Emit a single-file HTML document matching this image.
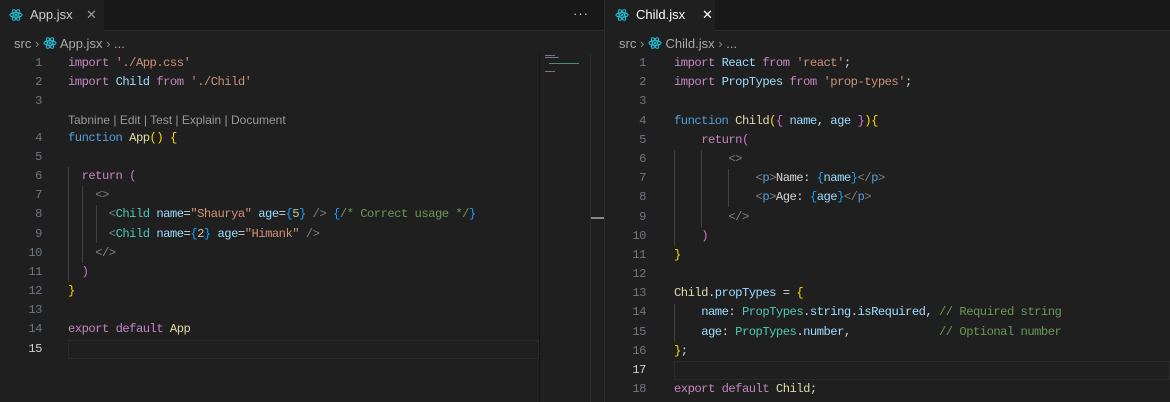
<!DOCTYPE html>
<html><head><meta charset="utf-8"><style>
*{margin:0;padding:0;box-sizing:border-box}
html,body{width:1170px;height:402px;overflow:hidden}
body{background:#1f1f1f;position:relative;font-family:"Liberation Sans",sans-serif}
.tabbar{position:absolute;top:0;height:31px;background:#181818;border-bottom:1px solid #2b2b2b}
.tab{position:absolute;top:0;height:31px;background:#1f1f1f;color:#ccc;font-size:13px;line-height:30px}
.crumb{position:absolute;top:36px;color:#a9a9a9;font-size:13px}
.code{position:absolute;font-family:"Liberation Mono",monospace;font-size:12.2px;letter-spacing:-0.52px;color:#d4d4d4}
.ln{position:absolute;font-family:"Liberation Mono",monospace;font-size:12.2px;letter-spacing:-0.5px;color:#6e7681;text-align:right;width:30px}
.l{height:19.2px;line-height:19.2px;white-space:pre}
.lens{height:17px;line-height:17px;font-family:"Liberation Sans",sans-serif;font-size:12px;letter-spacing:0;color:#999;white-space:pre}
.k{color:#c586c0}.b{color:#569cd6}.s{color:#ce9178}.t{color:#4ec9b0}.v{color:#9cdcfe}.f{color:#dcdcaa}.y{color:#ffd700}.p{color:#da70d6}.g{color:#808080}.c{color:#6a9955}.bl{color:#179fff}.n{color:#b5cea8}
.guide{position:absolute;width:1px;background:#404040}
</style></head><body>
<svg width="0" height="0" style="position:absolute"><defs><g id="r"><ellipse cx="0" cy="0" rx="6" ry="2.4" fill="none" stroke="#22b8cf" stroke-width="1.1"/><ellipse cx="0" cy="0" rx="6" ry="2.4" fill="none" stroke="#22b8cf" stroke-width="1.1" transform="rotate(60)"/><ellipse cx="0" cy="0" rx="6" ry="2.4" fill="none" stroke="#22b8cf" stroke-width="1.1" transform="rotate(120)"/><circle r="1.2" fill="#22b8cf"/></g></defs></svg>

<div class="tabbar" style="left:0;width:604px"></div>
<div class="tab" style="left:0;width:104px"><svg width="16" height="16" style="position:absolute;left:8px;top:7px"><use href="#r" x="8" y="8"/></svg><span style="position:absolute;left:30px">App.jsx</span><span style="position:absolute;left:86px;color:#999">✕</span></div>
<div style="position:absolute;left:573px;top:6px;color:#ccc;font-size:13px;letter-spacing:1px">···</div>
<div class="crumb" style="left:14px">src <span style="color:#888">›</span> <svg width="14" height="14" style="vertical-align:-2px"><use href="#r" x="7" y="7"/></svg> App.jsx <span style="color:#888">›</span> ...</div>

<div class="tabbar" style="left:605px;width:565px"></div>
<div class="tab" style="left:605px;width:110px;color:#fff"><svg width="16" height="16" style="position:absolute;left:9px;top:7px"><use href="#r" x="8" y="8"/></svg><span style="position:absolute;left:31px">Child.jsx</span><span style="position:absolute;left:97px">✕</span></div>
<div class="crumb" style="left:619px">src <span style="color:#888">›</span> <svg width="14" height="14" style="vertical-align:-2px"><use href="#r" x="7" y="7"/></svg> Child.jsx <span style="color:#888">›</span> ...</div>

<div style="position:absolute;left:539px;top:54px;width:1px;height:348px;background:#151515"></div>
<div style="position:absolute;left:590px;top:54px;width:1px;height:348px;background:#2a2a2a"></div>
<div style="position:absolute;left:591px;top:217px;width:13px;height:2px;background:#888"></div>
<div style="position:absolute;left:604px;top:0;width:1px;height:402px;background:#2b2b2b"></div>
<div style="position:absolute;left:545px;top:55px;width:10px;height:1px;background:#8a6a8a"></div>
<div style="position:absolute;left:545px;top:57px;width:14px;height:1px;background:#6a7a8a"></div>
<div style="position:absolute;left:549px;top:63px;width:30px;height:1px;background:#4a8a7a"></div>
<div style="position:absolute;left:545px;top:71px;width:10px;height:1px;background:#8a6a8a"></div>

<div style="position:absolute;left:68px;top:340px;width:471px;height:19px;border:1px solid #2a2a2a"></div>
<div style="position:absolute;left:674px;top:361px;width:496px;height:19px;border:1px solid #2a2a2a"></div>

<div class="ln" style="left:12px;top:54px"><div class="l">1</div><div class="l">2</div><div class="l">3</div><div class="lens"></div><div class="l">4</div><div class="l">5</div><div class="l">6</div><div class="l">7</div><div class="l">8</div><div class="l">9</div><div class="l">10</div><div class="l">11</div><div class="l">12</div><div class="l">13</div><div class="l">14</div><div class="l" style="color:#ccc">15</div></div>
<div class="guide" style="left:68px;top:167px;height:115px"></div>
<div class="guide" style="left:82px;top:186px;height:77px"></div>
<div class="guide" style="left:96px;top:205px;height:38px"></div>
<div class="code" style="left:68px;top:54px"><div class="l"><span class="k">import</span> <span class="s">'./App.css'</span></div><div class="l"><span class="k">import</span> <span class="v">Child</span> <span class="k">from</span> <span class="s">'./Child'</span></div><div class="l"> </div><div class="lens">Tabnine | Edit | Test | Explain | Document</div><div class="l"><span class="b">function</span> <span class="f">App</span><span class="y">()</span> <span class="y">{</span></div><div class="l"> </div><div class="l">  <span class="k">return</span> <span class="p">(</span></div><div class="l">    <span class="g">&lt;&gt;</span></div><div class="l">      <span class="g">&lt;</span><span class="t">Child</span> <span class="v">name</span>=<span class="s">"Shaurya"</span> <span class="v">age</span>=<span class="bl">{</span><span class="n">5</span><span class="bl">}</span> <span class="g">/&gt;</span> <span class="bl">{</span><span class="c">/* Correct usage */</span><span class="bl">}</span></div><div class="l">      <span class="g">&lt;</span><span class="t">Child</span> <span class="v">name</span>=<span class="bl">{</span><span class="n">2</span><span class="bl">}</span> <span class="v">age</span>=<span class="s">"Himank"</span> <span class="g">/&gt;</span></div><div class="l">    <span class="g">&lt;/&gt;</span></div><div class="l">  <span class="p">)</span></div><div class="l"><span class="y">}</span></div><div class="l"> </div><div class="l"><span class="k">export</span> <span class="k">default</span> <span class="f">App</span></div><div class="l"> </div></div>

<div class="ln" style="left:616px;top:54px"><div class="l">1</div><div class="l">2</div><div class="l">3</div><div class="l">4</div><div class="l">5</div><div class="l">6</div><div class="l">7</div><div class="l">8</div><div class="l">9</div><div class="l">10</div><div class="l">11</div><div class="l">12</div><div class="l">13</div><div class="l">14</div><div class="l">15</div><div class="l">16</div><div class="l" style="color:#ccc">17</div><div class="l">18</div></div>
<div class="guide" style="left:674px;top:150px;height:96px"></div>
<div class="guide" style="left:701px;top:150px;height:77px"></div>
<div class="guide" style="left:728px;top:169px;height:38px"></div>
<div class="guide" style="left:674px;top:304px;height:38px"></div>
<div class="code" style="left:674px;top:54px"><div class="l"><span class="k">import</span> <span class="v">React</span> <span class="k">from</span> <span class="s">'react'</span>;</div><div class="l"><span class="k">import</span> <span class="v">PropTypes</span> <span class="k">from</span> <span class="s">'prop-types'</span>;</div><div class="l"> </div><div class="l"><span class="b">function</span> <span class="f">Child</span><span class="y">(</span><span class="p">{</span> <span class="v">name</span>, <span class="v">age</span> <span class="p">}</span><span class="y">){</span></div><div class="l">    <span class="k">return</span><span class="p">(</span></div><div class="l">        <span class="g">&lt;&gt;</span></div><div class="l">            <span class="g">&lt;</span><span class="b">p</span><span class="g">&gt;</span>Name: <span class="bl">{</span><span class="v">name</span><span class="bl">}</span><span class="g">&lt;/</span><span class="b">p</span><span class="g">&gt;</span></div><div class="l">            <span class="g">&lt;</span><span class="b">p</span><span class="g">&gt;</span>Age: <span class="bl">{</span><span class="v">age</span><span class="bl">}</span><span class="g">&lt;/</span><span class="b">p</span><span class="g">&gt;</span></div><div class="l">        <span class="g">&lt;/&gt;</span></div><div class="l">    <span class="p">)</span></div><div class="l"><span class="y">}</span></div><div class="l"> </div><div class="l"><span class="f">Child</span>.<span class="v">propTypes</span> = <span class="y">{</span></div><div class="l">    <span class="v">name</span>: <span class="t">PropTypes</span>.<span class="v">string</span>.<span class="v">isRequired</span>, <span class="c">// Required string</span></div><div class="l">    <span class="v">age</span>: <span class="t">PropTypes</span>.<span class="v">number</span>,             <span class="c">// Optional number</span></div><div class="l"><span class="y">}</span>;</div><div class="l"> </div><div class="l"><span class="k">export</span> <span class="k">default</span> <span class="f">Child</span>;</div></div>
</body></html>
